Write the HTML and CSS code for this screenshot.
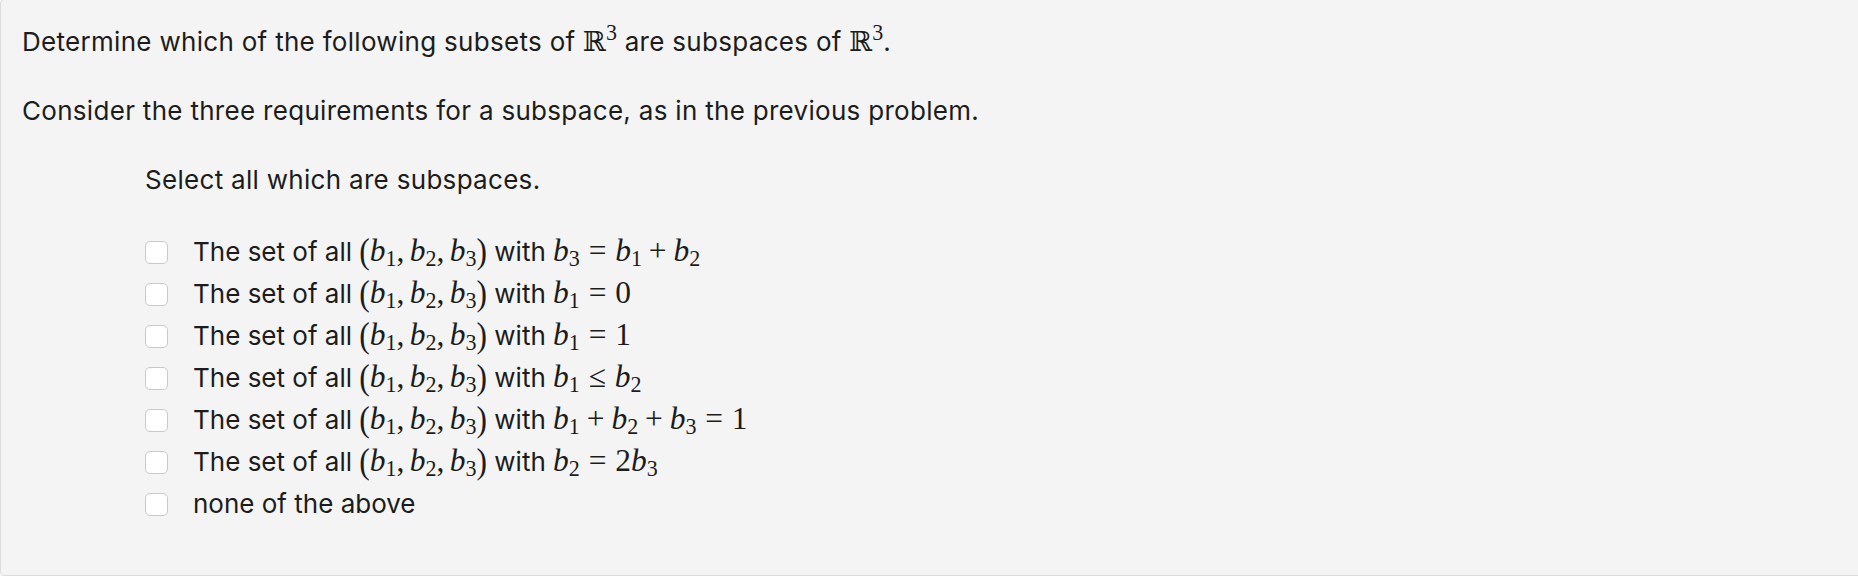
FILE: index.html
```html
<!DOCTYPE html>
<html>
<head>
<meta charset="utf-8">
<link rel="stylesheet" href="styles.css">
</head>
<body>
<div class="panel">
  <p class="para">Determine which of the following subsets of <span class="m"><span class="bb">ℝ</span><sup class="sup">3</sup></span> are subspaces of <span class="m"><span class="bb">ℝ</span><sup class="sup">3</sup></span>.</p>
  <p class="para">Consider the three requirements for a subspace, as in the previous problem.</p>
  <div class="question">
    <p class="para">Select all which are subspaces.</p>
    <ul class="choices">
      <li class="choice"><span class="box"></span><span class="label">The set of all <span class="m"><span class="pn">(</span><i class="v">b</i><sub class="s">1</sub><span class="pc">,</span><i class="v">b</i><sub class="s">2</sub><span class="pc">,</span><i class="v">b</i><sub class="s">3</sub><span class="pn">)</span></span> with <span class="m"><i class="v">b</i><sub class="s">3</sub><span class="rel">=</span><i class="v">b</i><sub class="s">1</sub><span class="bin">+</span><i class="v">b</i><sub class="s">2</sub></span></span></li>
      <li class="choice"><span class="box"></span><span class="label">The set of all <span class="m"><span class="pn">(</span><i class="v">b</i><sub class="s">1</sub><span class="pc">,</span><i class="v">b</i><sub class="s">2</sub><span class="pc">,</span><i class="v">b</i><sub class="s">3</sub><span class="pn">)</span></span> with <span class="m"><i class="v">b</i><sub class="s">1</sub><span class="rel">=</span>0</span></span></li>
      <li class="choice"><span class="box"></span><span class="label">The set of all <span class="m"><span class="pn">(</span><i class="v">b</i><sub class="s">1</sub><span class="pc">,</span><i class="v">b</i><sub class="s">2</sub><span class="pc">,</span><i class="v">b</i><sub class="s">3</sub><span class="pn">)</span></span> with <span class="m"><i class="v">b</i><sub class="s">1</sub><span class="rel">=</span>1</span></span></li>
      <li class="choice"><span class="box"></span><span class="label">The set of all <span class="m"><span class="pn">(</span><i class="v">b</i><sub class="s">1</sub><span class="pc">,</span><i class="v">b</i><sub class="s">2</sub><span class="pc">,</span><i class="v">b</i><sub class="s">3</sub><span class="pn">)</span></span> with <span class="m"><i class="v">b</i><sub class="s">1</sub><span class="rel">≤</span><i class="v">b</i><sub class="s">2</sub></span></span></li>
      <li class="choice"><span class="box"></span><span class="label">The set of all <span class="m"><span class="pn">(</span><i class="v">b</i><sub class="s">1</sub><span class="pc">,</span><i class="v">b</i><sub class="s">2</sub><span class="pc">,</span><i class="v">b</i><sub class="s">3</sub><span class="pn">)</span></span> with <span class="m"><i class="v">b</i><sub class="s">1</sub><span class="bin">+</span><i class="v">b</i><sub class="s">2</sub><span class="bin">+</span><i class="v">b</i><sub class="s">3</sub><span class="rel">=</span>1</span></span></li>
      <li class="choice"><span class="box"></span><span class="label">The set of all <span class="m"><span class="pn">(</span><i class="v">b</i><sub class="s">1</sub><span class="pc">,</span><i class="v">b</i><sub class="s">2</sub><span class="pc">,</span><i class="v">b</i><sub class="s">3</sub><span class="pn">)</span></span> with <span class="m"><i class="v">b</i><sub class="s">2</sub><span class="rel">=</span>2<i class="v">b</i><sub class="s">3</sub></span></span></li>
      <li class="choice"><span class="box"></span><span class="label">none of the above</span></li>
    </ul>
  </div>
</div>
</body>
</html>
```
FILE: styles.css
```css
html, body {
  margin: 0;
  padding: 0;
  background: #ffffff;
}
body {
  font-family: Inter, "Noto Sans", sans-serif;
  font-size: 26px;
  color: #1c1c1c;
}
.panel {
  background: #f4f4f4;
  border: 1px solid #dcdcdc;
  border-radius: 4px;
  margin-top: -1px;
  width: 1900px;
  height: 577px;
  box-sizing: border-box;
  padding: 24px 0 0 21px;
}
.para {
  margin: 0 0 33px 0;
  line-height: 36px;
  letter-spacing: 0.3px;
}
.question {
  padding-left: 123px;
}
.choices {
  list-style: none;
  margin: 0;
  padding: 0;
}
.choice {
  display: flex;
  align-items: center;
  height: 42px;
}
.box {
  flex: none;
  width: 21px;
  height: 21px;
  border: 1px solid #c9c9c9;
  border-radius: 5px;
  background: #ffffff;
  margin-right: 25px;
}
.label {
  white-space: nowrap;
  line-height: 36px;
}
.m {
  font-family: "Liberation Serif", "DejaVu Serif", serif;
  font-size: 1.21em;
  line-height: 1;
  letter-spacing: 0;
}
.v {
  font-style: italic;
}
.s {
  font-size: 0.7em;
  vertical-align: -0.22em;
  line-height: 0;
}
.sup {
  font-size: 0.7em;
  vertical-align: 0.5em;
  line-height: 0;
}
.bb {
  font-family: "DejaVu Serif", serif;
  font-size: 0.88em;
}
.pn {
  display: inline-block;
  transform: scaleY(1.15);
}
.pc {
  margin-right: 0.17em;
}
.rel {
  margin: 0 0.28em;
}
.bin {
  margin: 0 0.22em;
}
```
